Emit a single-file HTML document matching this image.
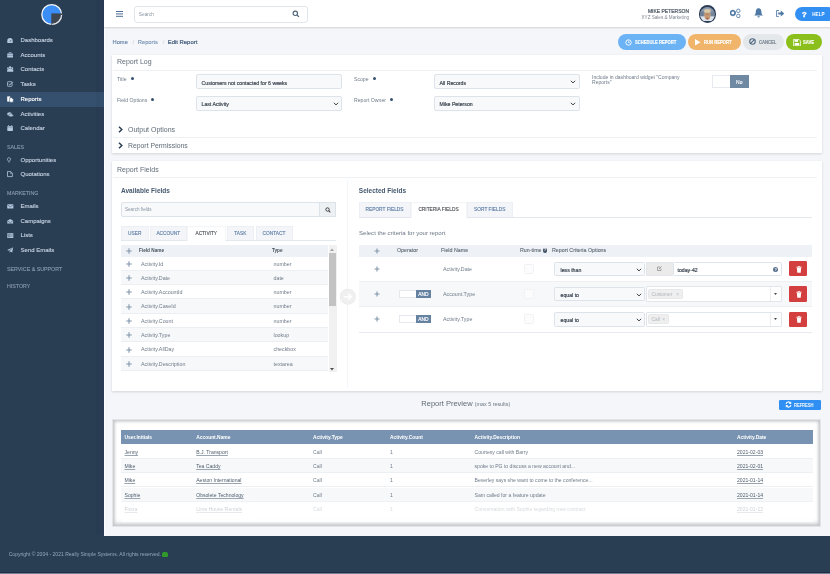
<!DOCTYPE html>
<html><head><meta charset="utf-8">
<style>
*{box-sizing:border-box;margin:0;padding:0}
html,body{width:830px;height:574px;overflow:hidden;background:#f5f6f9;font-family:"Liberation Sans",sans-serif;color:#555}
.a{position:absolute}
#side{left:0;top:0;width:104px;height:536px;background:#293d53}
#footer{left:0;top:535.8px;width:830px;height:38.2px;background:#293d53}
#top{left:104px;top:0;width:726px;height:27px;background:#fff;box-shadow:0 1px 1.5px rgba(0,0,0,.15)}
.nav{left:0;width:104px;height:15px;color:#c8d5e4;font-size:6px;line-height:15px;-webkit-text-stroke:0.12px currentColor}
.nav .t{position:absolute;left:20.5px;top:0}
.nav .i{position:absolute;left:7px;top:4.5px;width:7px;height:6px}
.sec{left:7px;color:#8b9db2;font-size:5.3px;line-height:8px;-webkit-text-stroke:0.1px currentColor}
.panel{background:#fff;box-shadow:0 1px 2.5px rgba(0,0,0,.14)}
.lbl{font-size:5.15px;color:#6f7b88}
.dot{display:inline-block;width:3px;height:3px;border-radius:50%;background:#34506e;margin-left:4px;vertical-align:1px}
.inp{background:#f7f9fb;border:1px solid #dde3ea;border-radius:2px;font-size:5.2px;color:#3d4650;font-weight:normal;-webkit-text-stroke:0.18px #3d4650;padding-top:1.7px}
.btn{border-radius:8px;color:#fff;font-size:4.6px;font-weight:bold;text-align:center;line-height:16px}

.tab{top:225.5px;height:14.5px;background:#f3f5f8;border:1px solid #eceff3;border-bottom:none;font-size:4.8px;color:#5b7ca6;-webkit-text-stroke:0.12px currentColor;text-align:center;line-height:13.6px}
.tab.act{background:#fff;color:#4a4f55;height:15px;border-color:#f3f5f7}
.th{font-size:4.7px;color:#46535f;font-weight:bold}
.td{font-size:5.3px;color:#6f7b88;line-height:6px;margin-top:-0.5px}

.tab2{top:202.3px;height:14.7px;background:#f3f5f8;border:1px solid #eceff3;border-bottom:none;font-size:4.8px;color:#5b7ca6;-webkit-text-stroke:0.12px currentColor;text-align:center;line-height:13.6px}
.tab2.act{background:#fff;color:#4a4f55;height:15.7px;border-color:#f3f5f7}
.th2{font-size:5.3px;color:#5d6874;line-height:6px;margin-top:-0.6px;-webkit-text-stroke:0.1px #5d6874}
.td2{font-size:5.3px;color:#6f7b88;line-height:6px;margin-top:-0.4px}
.td3{font-size:5.1px;color:#6f7b88;line-height:6px;margin-top:-0.6px}
.inp2{background:#f7f9fb;border:1px solid #dde3ea;border-radius:1.5px;font-size:5.2px;color:#3a4450;font-weight:normal;-webkit-text-stroke:0.18px #3a4450;padding-top:1.2px}

.bc{top:38.3px;font-size:5.75px;line-height:8px;-webkit-text-stroke:0.1px currentColor}
.bt{position:absolute;top:0.3px;font-size:5.2px;line-height:16px;white-space:nowrap;transform:scaleX(0.8);transform-origin:0 0;-webkit-text-stroke:0.15px currentColor}
</style></head><body style="filter:blur(0.3px)">
<!-- sidebar -->
<div id="side" class="a">
  <svg class="a" style="left:40px;top:2.5px" width="23" height="23" viewBox="0 0 23 23">
    <defs><clipPath id="cc"><circle cx="11.7" cy="11.5" r="10.6"/></clipPath></defs>
    <circle cx="11.7" cy="11.5" r="9.9" fill="#3a8ef5" stroke="#f4f6f9" stroke-width="1.3"/>
    <rect x="11.3" y="10.4" width="12" height="12" fill="#3d4651" clip-path="url(#cc)"/>
    <path d="M21.6 11.9 A9.9 9.9 0 0 1 12.2 21.4" fill="none" stroke="#e8ecf0" stroke-width="1.2"/>
  </svg>
  <div class="a nav" style="top:33px;"><span class="t">Dashboards</span></div>
  <svg class="a" style="left:6.8px;top:38.2px" width="7" height="7" viewBox="0 0 7 7"><path d="M0.3 5 V2.8 A2.7 2.7 0 0 1 5.7 2.8 V5 Z" fill="#b2c6de"/><path d="M3 3.8 L4 2" stroke="#293d53" stroke-width="0.6"/></svg>
  <div class="a nav" style="top:47.5px;"><span class="t">Accounts</span></div>
  <svg class="a" style="left:6.8px;top:51.5px" width="7" height="7" viewBox="0 0 7 7"><rect x="0.2" y="1.4" width="5.8" height="4.2" rx="0.5" fill="#b2c6de"/><path d="M2 1.4 V0.5 H4.2 V1.4" fill="none" stroke="#b2c6de" stroke-width="0.6"/><path d="M0.2 3.3 H6" stroke="#293d53" stroke-width="0.35"/></svg>
  <div class="a nav" style="top:62px;"><span class="t">Contacts</span></div>
  <svg class="a" style="left:6.8px;top:65.8px" width="7" height="7" viewBox="0 0 7 7"><circle cx="3.2" cy="1.6" r="1.3" fill="#b2c6de"/><circle cx="1" cy="2.2" r="0.9" fill="#b2c6de"/><circle cx="5.4" cy="2.2" r="0.9" fill="#b2c6de"/><path d="M0.1 5.8 V4 Q0.6 3 1.8 3 H4.6 Q5.9 3 6.3 4 V5.8 Z" fill="#b2c6de"/></svg>
  <div class="a nav" style="top:77px;"><span class="t">Tasks</span></div>
  <svg class="a" style="left:6.8px;top:81px" width="7" height="7" viewBox="0 0 7 7"><rect x="0.5" y="0.7" width="4.6" height="4.6" rx="0.6" fill="none" stroke="#b2c6de" stroke-width="0.8"/><path d="M1.6 2.9 L2.8 4 L5.6 0.9" fill="none" stroke="#b2c6de" stroke-width="0.9"/></svg>
  <div class="a nav" style="top:91.5px;background:#34506e;color:#fff;"><span class="t">Reports</span></div>
  <svg class="a" style="left:6.8px;top:95.8px" width="7" height="7" viewBox="0 0 7 7"><path d="M0.2 0.4 H3.2 V5.6 H0.2 Z" fill="#fff"/><path d="M2.6 1.8 H4.8 L6.2 3.2 V6.2 H2.6 Z" fill="#fff" stroke="#34506e" stroke-width="0.5"/></svg>
  <div class="a nav" style="top:106.5px;"><span class="t">Activities</span></div>
  <svg class="a" style="left:6.8px;top:111.5px" width="7" height="7" viewBox="0 0 7 7"><ellipse cx="2.5" cy="2" rx="2.4" ry="1.7" fill="#b2c6de"/><ellipse cx="4" cy="3.3" rx="2.2" ry="1.5" fill="#b2c6de" stroke="#293d53" stroke-width="0.4"/></svg>
  <div class="a nav" style="top:120.5px;"><span class="t">Calendar</span></div>
  <svg class="a" style="left:6.8px;top:125.2px" width="7" height="7" viewBox="0 0 7 7"><rect x="0.3" y="0.9" width="5.6" height="5" rx="0.4" fill="#b2c6de"/><path d="M1.5 0 V1.5 M4.7 0 V1.5" stroke="#b2c6de" stroke-width="0.7"/><path d="M0.3 2 H5.9" stroke="#293d53" stroke-width="0.35"/></svg>
  <div class="a nav" style="top:152.5px;"><span class="t">Opportunities</span></div>
  <svg class="a" style="left:6.8px;top:157.0px" width="7" height="7" viewBox="0 0 7 7"><path d="M1.6 4.2 Q0.2 3 0.4 1.8 A1.7 1.7 0 0 1 3.6 1.8 Q3.8 3 2.4 4.2 Z" fill="none" stroke="#b2c6de" stroke-width="0.7"/><path d="M1.3 5 H2.7" stroke="#b2c6de" stroke-width="0.7"/></svg>
  <div class="a nav" style="top:167px;"><span class="t">Quotations</span></div>
  <svg class="a" style="left:6.8px;top:171.3px" width="7" height="7" viewBox="0 0 7 7"><path d="M0.5 0.4 H3.5 L5.4 2.3 V5.6 H0.5 Z" fill="none" stroke="#b2c6de" stroke-width="0.8"/><path d="M3.4 0.4 V2.4 H5.4" fill="none" stroke="#b2c6de" stroke-width="0.6"/></svg>
  <div class="a nav" style="top:199px;"><span class="t">Emails</span></div>
  <svg class="a" style="left:6.8px;top:204.2px" width="7" height="7" viewBox="0 0 7 7"><rect x="0.2" y="0.3" width="6.2" height="4.3" rx="0.4" fill="#b2c6de"/><path d="M0.4 0.8 L3.3 2.9 L6.2 0.8" fill="none" stroke="#293d53" stroke-width="0.5"/></svg>
  <div class="a nav" style="top:214px;"><span class="t">Campaigns</span></div>
  <svg class="a" style="left:6.8px;top:218.6px" width="7" height="7" viewBox="0 0 7 7"><path d="M0.3 1.8 L3.2 0 L6.1 1.8 V4.6 H0.3 Z" fill="#b2c6de"/><path d="M0.8 2.2 L3.2 3.6 L5.6 2.2" fill="none" stroke="#293d53" stroke-width="0.5"/></svg>
  <div class="a nav" style="top:228px;"><span class="t">Lists</span></div>
  <svg class="a" style="left:6.8px;top:233.0px" width="7" height="7" viewBox="0 0 7 7"><rect x="0.3" y="0.2" width="6" height="4.8" fill="#b2c6de"/><path d="M0.8 1.8 H5.8 M0.8 3.3 H5.8 M2 0.7 V4.6" stroke="#293d53" stroke-width="0.4"/></svg>
  <div class="a nav" style="top:243px;"><span class="t">Send Emails</span></div>
  <svg class="a" style="left:6.8px;top:247.3px" width="7" height="7" viewBox="0 0 7 7"><path d="M6.2 0.2 L0.2 3 L2.2 3.8 Z" fill="#b2c6de"/><path d="M6.2 0.2 L2.6 4.2 L2.6 5.8 L3.6 4.6 L5.2 5.4 Z" fill="#b2c6de"/></svg>
  <div class="a sec" style="top:143px">SALES</div>
  <div class="a sec" style="top:189px">MARKETING</div>
  <div class="a sec" style="top:265px">SERVICE &amp; SUPPORT</div>
  <div class="a sec" style="top:281.5px">HISTORY</div>
  <div class="a" style="left:96.2px;top:0;width:3.5px;height:535px;background:rgba(20,30,50,.06)"></div>
  <div class="a" style="left:99.7px;top:0;width:4.3px;height:535px;background:rgba(60,50,110,.07)"></div>
</div>
<div class="a" style="left:104px;top:27px;width:1px;height:508px;background:#fdfdfe"></div>

<!-- topbar -->
<div id="top" class="a">
  <div class="a" style="left:12px;top:10.6px;width:7px;height:1.4px;background:#4d6f96;box-shadow:0 2.4px 0 #4d6f96,0 4.8px 0 #4d6f96"></div>
  <div class="a" style="left:29.5px;top:5.5px;width:174px;height:17px;border:1px solid #e1e6ec;border-radius:3px;background:#fff"></div>
  <div class="a" style="left:34.8px;top:11.6px;font-size:4.8px;color:#8a96a3">Search</div>
  <svg class="a" style="left:188.3px;top:10.2px" width="8" height="8" viewBox="0 0 8 8"><circle cx="3.3" cy="3.3" r="2.2" fill="none" stroke="#4f6479" stroke-width="1.1"/><path d="M4.9 4.9 L6.9 6.9" stroke="#4f6479" stroke-width="1.3"/></svg>
  <div class="a" style="right:141px;top:8.3px;font-size:5px;color:#4a5562;font-weight:normal;-webkit-text-stroke:0.2px #4a5562;text-align:right;white-space:nowrap">MIKE PETERSON</div>
  <div class="a" style="right:141px;top:14.6px;font-size:4.6px;color:#7d8793;text-align:right;white-space:nowrap">XYZ Sales &amp; Marketing</div>
  <div class="a" style="left:594.6px;top:5.1px;width:17.6px;height:17.6px;border-radius:50%;background:#2a3b55"></div>
  <svg class="a" style="left:596px;top:6.6px" width="14.8" height="14.8" viewBox="0 0 16 16"><defs><clipPath id="av"><circle cx="8" cy="8" r="8"/></clipPath></defs><g clip-path="url(#av)"><rect width="16" height="16" fill="#8d9aab"/><rect x="0" y="10" width="16" height="6" fill="#dfe5ec"/><rect x="0" y="5" width="4" height="5" fill="#6e7f94"/><rect x="12" y="5" width="4" height="5" fill="#75869a"/><ellipse cx="8" cy="9" rx="3.3" ry="5" fill="#c59872"/><ellipse cx="8" cy="4.2" rx="3.6" ry="2" fill="#d9c8a8"/><path d="M6 7.8 H10" stroke="#8a6a52" stroke-width="0.5"/><ellipse cx="8" cy="12.5" rx="1.5" ry="0.8" fill="#a46c55"/></g></svg>
  <svg class="a" style="left:626px;top:8px" width="11" height="11" viewBox="0 0 11 11"><circle cx="2.8" cy="5" r="2.2" fill="none" stroke="#4e79a5" stroke-width="1.5"/><circle cx="2.8" cy="5" r="2.75" fill="none" stroke="#4e79a5" stroke-width="0.9" stroke-dasharray="0.9 0.55"/><rect x="6.7" y="1.2" width="3.2" height="3.2" rx="1.1" fill="none" stroke="#4e79a5" stroke-width="0.9"/><rect x="6.7" y="6.3" width="3.2" height="3.2" rx="1.1" fill="none" stroke="#4e79a5" stroke-width="0.9"/></svg>
  <svg class="a" style="left:649.6px;top:8.3px" width="9.2" height="9.6" viewBox="0 0 9.2 9.6"><path d="M4.6 0.3 C2.4 0.3 1.8 2.2 1.8 4 C1.8 5.6 1.2 6.6 0.3 7.6 H8.9 C8 6.6 7.4 5.6 7.4 4 C7.4 2.2 6.8 0.3 4.6 0.3 Z" fill="#4e79a5"/><path d="M3.4 8.2 A1.2 1.2 0 0 0 5.8 8.2 Z" fill="#4e79a5"/></svg>
  <svg class="a" style="left:671.8px;top:9.6px" width="8.6" height="7.2" viewBox="0 0 8.6 7.2"><path d="M3 0.5 H0.6 V6.7 H3" fill="none" stroke="#4e79a5" stroke-width="0.9"/><path d="M2.2 2.6 H4.8 V0.6 L8.3 3.6 L4.8 6.6 V4.6 H2.2 Z" fill="#4e79a5"/></svg>
  <div class="a" style="left:691.4px;top:6.8px;width:40px;height:14.4px;border-radius:7.2px;background:#3390f3"></div>
  <div class="a" style="left:697.9px;top:10.8px;font-size:7.6px;line-height:8px;color:#fff;font-weight:bold;-webkit-text-stroke:0.35px #fff">?</div>
  <div class="a" style="left:708.3px;top:12.3px;font-size:4.6px;line-height:5px;color:#fff;font-weight:bold">HELP</div>
</div>

<!-- breadcrumb -->
<div class="a bc" style="left:112.5px;color:#5b7aa2">Home</div>
<div class="a bc" style="left:132.5px;color:#cdd4dc">/</div>
<div class="a bc" style="left:137.8px;color:#7390b3">Reports</div>
<div class="a bc" style="left:162.8px;color:#cdd4dc">/</div>
<div class="a bc" style="left:167.8px;color:#46607f;font-size:5.9px;-webkit-text-stroke:0.22px #46607f">Edit Report</div>
<div class="a btn" style="left:618px;top:34px;width:67.5px;height:16px;background:#6cb3f5"><span class="bt" style="left:17px">SCHEDULE REPORT</span></div>
<svg class="a" style="left:625.3px;top:38.5px" width="7" height="7" viewBox="0 0 7 7"><circle cx="3.5" cy="3.5" r="2.7" fill="none" stroke="#fff" stroke-width="0.9"/><path d="M3.5 1.8 V3.6 H4.8" fill="none" stroke="#fff" stroke-width="0.7"/></svg>
<div class="a btn" style="left:688px;top:34px;width:52.5px;height:16px;background:#f1b46b"><span class="bt" style="left:15.5px">RUN REPORT</span></div>
<svg class="a" style="left:695px;top:39.3px" width="6" height="7" viewBox="0 0 6 7"><path d="M0 0 L5.5 3.2 L0 6.4 Z" fill="#fff"/></svg>
<div class="a btn" style="left:742.8px;top:34px;width:41px;height:15.6px;background:#e5e8eb"><span class="bt" style="left:16px;color:#7b8694">CANCEL</span></div>
<svg class="a" style="left:748.8px;top:38.4px" width="7" height="7" viewBox="0 0 7 7"><circle cx="3.5" cy="3.5" r="2.75" fill="none" stroke="#4d6580" stroke-width="1.1"/><path d="M1.6 5.4 L5.4 1.6" stroke="#4d6580" stroke-width="1.1"/></svg>
<div class="a btn" style="left:785.8px;top:34px;width:35.8px;height:16px;background:#8bc01c"><span class="bt" style="left:17.3px">SAVE</span></div>
<svg class="a" style="left:793px;top:38.6px" width="8" height="7.5" viewBox="0 0 8 7.5"><path d="M0.4 0.4 H6 L7.4 1.8 V7.1 H0.4 Z" fill="none" stroke="#fff" stroke-width="0.8"/><rect x="1.5" y="0.8" width="3.6" height="2" fill="#fff"/><rect x="1.6" y="4" width="4.6" height="2.6" fill="#fff"/></svg>

<!-- report log panel -->
<div class="a panel" style="left:111.5px;top:55px;width:710px;height:97.8px"></div>
<div class="a" style="left:117px;top:58px;font-size:7px;color:#5f6b78">Report Log</div>
<div class="a" style="left:113px;top:69.5px;width:704px;height:1px;background:#eef1f4"></div>


<div class="a lbl" style="left:117px;top:76.1px">Title<span class="dot"></span></div>
<div class="a inp" style="left:195.5px;top:74.3px;width:146px;height:14.3px;padding-left:5px;line-height:12.3px">Customers not contacted for 6 weeks</div>
<div class="a lbl" style="left:117px;top:97.1px">Field Options<span class="dot"></span></div>
<div class="a inp" style="left:195.5px;top:95.6px;width:146px;height:15px;padding-left:5px;line-height:12.5px">Last Activity</div>
<svg class="a chev" style="left:333px;top:101.5px" width="6" height="4" viewBox="0 0 6 4"><path d="M0.8 0.8 L3 2.9 L5.2 0.8" fill="none" stroke="#444" stroke-width="1"/></svg>
<div class="a lbl" style="left:354px;top:76.1px">Scope<span class="dot"></span></div>
<div class="a inp" style="left:433.5px;top:74.3px;width:146px;height:14.3px;padding-left:5px;line-height:12.3px">All Records</div>
<svg class="a chev" style="left:570px;top:80px" width="6" height="4" viewBox="0 0 6 4"><path d="M0.8 0.8 L3 2.9 L5.2 0.8" fill="none" stroke="#444" stroke-width="1"/></svg>
<div class="a lbl" style="left:354px;top:97.1px">Report Owner<span class="dot"></span></div>
<div class="a inp" style="left:433.5px;top:95.6px;width:146px;height:15px;padding-left:5px;line-height:12.5px">Mike Peterson</div>
<svg class="a chev" style="left:570px;top:101.5px" width="6" height="4" viewBox="0 0 6 4"><path d="M0.8 0.8 L3 2.9 L5.2 0.8" fill="none" stroke="#444" stroke-width="1"/></svg>
<div class="a lbl" style="left:592px;top:74.5px;width:93px;line-height:5.1px;font-size:5.05px">Include in dashboard widget "Company Reports"</div>
<div class="a" style="left:711.5px;top:74.5px;width:37px;height:13.6px;border:1px solid #e6eaee;background:#fff"></div>
<div class="a" style="left:730px;top:74.5px;width:18.5px;height:13.6px;background:#7089a3;color:#fff;font-size:5px;text-align:center;line-height:15.2px;-webkit-text-stroke:0.1px #fff">No</div>
<svg class="a" style="left:118px;top:126px" width="5" height="7" viewBox="0 0 5 7"><path d="M1 0.8 L3.8 3.5 L1 6.2" fill="none" stroke="#2c3e55" stroke-width="1.5"/></svg>
<div class="a" style="left:128px;top:125.5px;font-size:7px;color:#5f6b78">Output Options</div>
<div class="a" style="left:113px;top:136.5px;width:704px;height:1px;background:#eef1f4"></div>
<svg class="a" style="left:118px;top:142px" width="5" height="7" viewBox="0 0 5 7"><path d="M1 0.8 L3.8 3.5 L1 6.2" fill="none" stroke="#2c3e55" stroke-width="1.5"/></svg>
<div class="a" style="left:128px;top:141.6px;font-size:6.85px;color:#5f6b78">Report Permissions</div>

<!-- report fields panel -->
<div class="a panel" style="left:111.5px;top:160.8px;width:710px;height:230.2px"></div>
<div class="a" style="left:117px;top:165.5px;font-size:7px;color:#5f6b78">Report Fields</div>
<div class="a" style="left:113px;top:177px;width:704px;height:1px;background:#eef1f4"></div>
<div class="a" style="left:346.8px;top:180px;width:1px;height:208px;background:#f4f5f7"></div>
<div class="a" style="left:121px;top:187px;font-size:6.5px;color:#45586e;font-weight:bold">Available Fields</div>
<div class="a" style="left:358.8px;top:187px;font-size:6.5px;color:#45586e;font-weight:bold">Selected Fields</div>

<div class="a" style="left:121px;top:202px;width:215px;height:14.5px;border:1px solid #dde3ea;border-radius:2px;background:#f7f9fb"></div>
<div class="a" style="left:319px;top:202px;width:17px;height:14.5px;border:1px solid #dde3ea;background:#eef1f4"></div>
<svg class="a" style="left:324.8px;top:206.6px" width="6" height="6" viewBox="0 0 6 6"><circle cx="2.5" cy="2.5" r="1.7" fill="none" stroke="#444" stroke-width="1"/><path d="M3.7 3.7 L5.3 5.3" stroke="#444" stroke-width="1.1"/></svg>
<div class="a" style="left:125px;top:207px;font-size:4.6px;color:#8a96a3">Search fields</div>
<!-- tabs left -->
<div class="a" style="left:121px;top:239.5px;width:215px;height:1px;background:#e3e8ee"></div>
<div class="a tab" style="left:121px;width:27.5px">USER</div>
<div class="a tab" style="left:149.5px;width:37.5px">ACCOUNT</div>
<div class="a tab act" style="left:187px;width:38.5px">ACTIVITY</div>
<div class="a tab" style="left:226.5px;width:27.5px">TASK</div>
<div class="a tab" style="left:255.5px;width:37px">CONTACT</div>
<!-- left table -->
<div class="a" style="left:121px;top:244.5px;width:207px;height:12px;background:#eef2f6"></div>
<svg class="a" style="left:126px;top:247.5px" width="6" height="6" viewBox="0 0 6 6"><path d="M3 0.3 V5.7 M0.3 3 H5.7" stroke="#7f93a8" stroke-width="1.05"/></svg>
<div class="a th" style="left:139px;top:248px">Field Name</div>
<div class="a th" style="left:272px;top:248px">Type</div>
<div class="a" style="left:121px;top:256.5px;width:207px;height:14.3px;background:#ffffff;border-bottom:1px solid #edf0f3"></div><svg class="a" style="left:126px;top:260.8px" width="6" height="6" viewBox="0 0 6 6"><path d="M3 0.3 V5.7 M0.3 3 H5.7" stroke="#7f93a8" stroke-width="1.05"/></svg><div class="a td" style="left:141px;top:261.0px">Activity.Id</div><div class="a td" style="left:273.5px;top:261.0px">number</div><div class="a" style="left:121px;top:270.8px;width:207px;height:14.3px;background:#f6f8fa;border-bottom:1px solid #edf0f3"></div><svg class="a" style="left:126px;top:275.1px" width="6" height="6" viewBox="0 0 6 6"><path d="M3 0.3 V5.7 M0.3 3 H5.7" stroke="#7f93a8" stroke-width="1.05"/></svg><div class="a td" style="left:141px;top:275.3px">Activity.Date</div><div class="a td" style="left:273.5px;top:275.3px">date</div><div class="a" style="left:121px;top:285.1px;width:207px;height:14.3px;background:#ffffff;border-bottom:1px solid #edf0f3"></div><svg class="a" style="left:126px;top:289.40000000000003px" width="6" height="6" viewBox="0 0 6 6"><path d="M3 0.3 V5.7 M0.3 3 H5.7" stroke="#7f93a8" stroke-width="1.05"/></svg><div class="a td" style="left:141px;top:289.6px">Activity.AccountId</div><div class="a td" style="left:273.5px;top:289.6px">number</div><div class="a" style="left:121px;top:299.40000000000003px;width:207px;height:14.3px;background:#f6f8fa;border-bottom:1px solid #edf0f3"></div><svg class="a" style="left:126px;top:303.70000000000005px" width="6" height="6" viewBox="0 0 6 6"><path d="M3 0.3 V5.7 M0.3 3 H5.7" stroke="#7f93a8" stroke-width="1.05"/></svg><div class="a td" style="left:141px;top:303.90000000000003px">Activity.CaseId</div><div class="a td" style="left:273.5px;top:303.90000000000003px">number</div><div class="a" style="left:121px;top:313.70000000000005px;width:207px;height:14.3px;background:#ffffff;border-bottom:1px solid #edf0f3"></div><svg class="a" style="left:126px;top:318.00000000000006px" width="6" height="6" viewBox="0 0 6 6"><path d="M3 0.3 V5.7 M0.3 3 H5.7" stroke="#7f93a8" stroke-width="1.05"/></svg><div class="a td" style="left:141px;top:318.20000000000005px">Activity.Count</div><div class="a td" style="left:273.5px;top:318.20000000000005px">number</div><div class="a" style="left:121px;top:328.00000000000006px;width:207px;height:14.3px;background:#f6f8fa;border-bottom:1px solid #edf0f3"></div><svg class="a" style="left:126px;top:332.30000000000007px" width="6" height="6" viewBox="0 0 6 6"><path d="M3 0.3 V5.7 M0.3 3 H5.7" stroke="#7f93a8" stroke-width="1.05"/></svg><div class="a td" style="left:141px;top:332.50000000000006px">Activity.Type</div><div class="a td" style="left:273.5px;top:332.50000000000006px">lookup</div><div class="a" style="left:121px;top:342.30000000000007px;width:207px;height:14.3px;background:#ffffff;border-bottom:1px solid #edf0f3"></div><svg class="a" style="left:126px;top:346.6000000000001px" width="6" height="6" viewBox="0 0 6 6"><path d="M3 0.3 V5.7 M0.3 3 H5.7" stroke="#7f93a8" stroke-width="1.05"/></svg><div class="a td" style="left:141px;top:346.80000000000007px">Activity.AllDay</div><div class="a td" style="left:273.5px;top:346.80000000000007px">checkbox</div><div class="a" style="left:121px;top:356.6000000000001px;width:207px;height:14.3px;background:#f6f8fa;border-bottom:1px solid #edf0f3"></div><svg class="a" style="left:126px;top:360.9000000000001px" width="6" height="6" viewBox="0 0 6 6"><path d="M3 0.3 V5.7 M0.3 3 H5.7" stroke="#7f93a8" stroke-width="1.05"/></svg><div class="a td" style="left:141px;top:361.1000000000001px">Activity.Description</div><div class="a td" style="left:273.5px;top:361.1000000000001px">textarea</div>
<div class="a" style="left:328.5px;top:244.5px;width:8px;height:127.5px;background:#f1f1f1"></div>
<div class="a" style="left:329px;top:253.4px;width:6.8px;height:52.5px;background:#c3c3c3"></div>
<svg class="a" style="left:330px;top:247.5px" width="4" height="3" viewBox="0 0 4 3"><path d="M0 3 L2 0.5 L4 3Z" fill="#a3a3a3"/></svg>
<svg class="a" style="left:330px;top:367.5px" width="4" height="3" viewBox="0 0 4 3"><path d="M0 0 L2 2.5 L4 0Z" fill="#505050"/></svg>
<svg class="a" style="left:339px;top:287.5px" width="18" height="18" viewBox="0 0 18 18"><circle cx="8.8" cy="8.7" r="8" fill="#ebebeb"/><circle cx="8.8" cy="8.7" r="7.2" fill="#f0f0f0"/><path d="M4.8 8.7 H12.2 M9.2 5.6 L12.4 8.7 L9.2 11.8" fill="none" stroke="#fff" stroke-width="1.5"/></svg>

<div class="a" style="left:358.5px;top:217px;width:453px;height:1px;background:#e3e8ee"></div>
<div class="a tab2" style="left:358.5px;width:52px">REPORT FIELDS</div>
<div class="a tab2 act" style="left:410.5px;width:56px">CRITERIA FIELDS</div>
<div class="a tab2" style="left:467px;width:45.5px">SORT FIELDS</div>
<div class="a" style="left:359px;top:229.6px;font-size:6.05px;color:#6b7785">Select the criteria for your report</div>
<div class="a" style="left:359px;top:244.5px;width:453px;height:12.3px;background:#eef2f6"></div>
<svg class="a" style="left:373.5px;top:247.5px" width="6" height="6" viewBox="0 0 6 6"><path d="M3 0.5 V5.5 M0.5 3 H5.5" stroke="#8296ab" stroke-width="1.1"/></svg>
<div class="a th2" style="left:397px;top:248px">Operator</div>
<div class="a th2" style="left:441px;top:248px">Field Name</div>
<div class="a th2" style="left:520px;top:248px">Run-time</div><div class="a" style="left:542.7px;top:248.4px;width:4.8px;height:4.8px;border-radius:50%;background:#3f5166;color:#fff;font-size:4px;line-height:4.8px;text-align:center;font-weight:bold">?</div>
<div class="a th2" style="left:552px;top:248px">Report Criteria Options</div>
<div class="a" style="left:359px;top:281px;width:453px;height:25.5px;background:#f6f8fa;border-top:1px solid #edf0f3;border-bottom:1px solid #edf0f3"></div>
<div class="a" style="left:359px;top:332px;width:453px;height:1px;background:#e6eaef"></div>
<svg class="a" style="left:373.5px;top:266px" width="6" height="6" viewBox="0 0 6 6"><path d="M3 0.5 V5.5 M0.5 3 H5.5" stroke="#8296ab" stroke-width="1.1"/></svg><div class="a td2" style="left:443px;top:266.2px">Activity.Date</div><div class="a" style="left:524px;top:264px;width:10px;height:10px;border:1px solid #f0f2f5;border-radius:1.5px;background:#fcfcfd"></div><div class="a inp2" style="left:554px;top:261.7px;width:90.5px;height:14.6px;padding-left:5.5px;line-height:12.6px">less than</div><svg class="a" style="left:635.5px;top:267.5px" width="6" height="4" viewBox="0 0 6 4"><path d="M0.8 0.8 L3 2.9 L5.2 0.8" fill="none" stroke="#444" stroke-width="1"/></svg><div class="a" style="left:789.3px;top:261.2px;width:18.2px;height:15.3px;background:#d33f3f;border-radius:1.2px"></div><svg class="a" style="left:795.5px;top:265.5px" width="6" height="7" viewBox="0 0 6 7"><path d="M0.3 1.3 H5.7 M2 1.3 V0.4 H4 V1.3" stroke="#fff" stroke-width="0.8" fill="none"/><path d="M0.9 2 H5.1 L4.7 6.8 H1.3 Z" fill="#fff"/></svg><svg class="a" style="left:373.5px;top:291.2px" width="6" height="6" viewBox="0 0 6 6"><path d="M3 0.5 V5.5 M0.5 3 H5.5" stroke="#8296ab" stroke-width="1.1"/></svg><div class="a" style="left:399px;top:289.7px;width:31.5px;height:8.6px;border:1px solid #e5e9ed;background:#fff"></div><div class="a" style="left:415.5px;top:289.6px;width:15.7px;height:8.6px;background:#6582a1;color:#fff;font-size:4.9px;text-align:center;line-height:9.4px;-webkit-text-stroke:0.15px #fff">AND</div><div class="a td2" style="left:443px;top:291.4px">Account.Type</div><div class="a" style="left:524px;top:289.2px;width:10px;height:10px;border:1px solid #f0f2f5;border-radius:1.5px;background:#fcfcfd"></div><div class="a inp2" style="left:554px;top:286.9px;width:90.5px;height:14.6px;padding-left:5.5px;line-height:12.6px">equal to</div><svg class="a" style="left:635.5px;top:292.7px" width="6" height="4" viewBox="0 0 6 4"><path d="M0.8 0.8 L3 2.9 L5.2 0.8" fill="none" stroke="#444" stroke-width="1"/></svg><div class="a" style="left:789.3px;top:286.4px;width:18.2px;height:15.3px;background:#d33f3f;border-radius:1.2px"></div><svg class="a" style="left:795.5px;top:290.7px" width="6" height="7" viewBox="0 0 6 7"><path d="M0.3 1.3 H5.7 M2 1.3 V0.4 H4 V1.3" stroke="#fff" stroke-width="0.8" fill="none"/><path d="M0.9 2 H5.1 L4.7 6.8 H1.3 Z" fill="#fff"/></svg><svg class="a" style="left:373.5px;top:316.4px" width="6" height="6" viewBox="0 0 6 6"><path d="M3 0.5 V5.5 M0.5 3 H5.5" stroke="#8296ab" stroke-width="1.1"/></svg><div class="a" style="left:399px;top:314.9px;width:31.5px;height:8.6px;border:1px solid #e5e9ed;background:#fff"></div><div class="a" style="left:415.5px;top:314.8px;width:15.7px;height:8.6px;background:#6582a1;color:#fff;font-size:4.9px;text-align:center;line-height:9.4px;-webkit-text-stroke:0.15px #fff">AND</div><div class="a td2" style="left:443px;top:316.59999999999997px">Activity.Type</div><div class="a" style="left:524px;top:314.4px;width:10px;height:10px;border:1px solid #f0f2f5;border-radius:1.5px;background:#fcfcfd"></div><div class="a inp2" style="left:554px;top:312.09999999999997px;width:90.5px;height:14.6px;padding-left:5.5px;line-height:12.6px">equal to</div><svg class="a" style="left:635.5px;top:317.9px" width="6" height="4" viewBox="0 0 6 4"><path d="M0.8 0.8 L3 2.9 L5.2 0.8" fill="none" stroke="#444" stroke-width="1"/></svg><div class="a" style="left:789.3px;top:311.6px;width:18.2px;height:15.3px;background:#d33f3f;border-radius:1.2px"></div><svg class="a" style="left:795.5px;top:315.9px" width="6" height="7" viewBox="0 0 6 7"><path d="M0.3 1.3 H5.7 M2 1.3 V0.4 H4 V1.3" stroke="#fff" stroke-width="0.8" fill="none"/><path d="M0.9 2 H5.1 L4.7 6.8 H1.3 Z" fill="#fff"/></svg>
<div class="a" style="left:646px;top:261.7px;width:27px;height:14.6px;background:#ebebeb;border:1px solid #e2e6eb;border-right:none"></div>
<svg class="a" style="left:657px;top:266px" width="5" height="5" viewBox="0 0 5 5"><path d="M0.5 1 H3 M0.5 1 V4.5 H4 V2.5" fill="none" stroke="#777" stroke-width="0.6"/><path d="M2 3 L4.5 0.5" stroke="#777" stroke-width="0.7"/></svg>
<div class="a inp2" style="left:673px;top:261.7px;width:108.6px;height:14.6px;background:#fff;padding-left:3.5px;line-height:12.6px">today-42</div>
<div class="a" style="left:773.2px;top:266.6px;width:5px;height:5px;border-radius:50%;background:#566f8c;color:#fff;font-size:4px;line-height:5px;text-align:center;font-weight:bold">?</div>
<div class="a" style="left:646px;top:286.3px;width:135.6px;height:15.9px;background:#fff;border:1px solid #e1e6ec;border-radius:1px"></div><div class="a" style="left:769.8px;top:287.3px;width:1px;height:13.9px;background:#eceff2"></div><svg class="a" style="left:774px;top:293.2px" width="3" height="2" viewBox="0 0 3 2"><path d="M0 0 H3 L1.5 2Z" fill="#444"/></svg><div class="a" style="left:648px;top:289.2px;width:35px;height:10px;background:#efefef;border:1px solid #e6e8ea;border-radius:1.5px;font-size:4.8px;color:#afb5bc;line-height:9.6px;padding-left:2.5px">Customer<span style="position:absolute;right:3px;color:#b7bec6">&times;</span></div><div class="a" style="left:646px;top:311.5px;width:135.6px;height:15.9px;background:#fff;border:1px solid #e1e6ec;border-radius:1px"></div><div class="a" style="left:769.8px;top:312.5px;width:1px;height:13.9px;background:#eceff2"></div><svg class="a" style="left:774px;top:318.4px" width="3" height="2" viewBox="0 0 3 2"><path d="M0 0 H3 L1.5 2Z" fill="#444"/></svg><div class="a" style="left:648px;top:314.4px;width:21px;height:10px;background:#efefef;border:1px solid #e6e8ea;border-radius:1.5px;font-size:4.8px;color:#afb5bc;line-height:9.6px;padding-left:2.5px">Call<span style="position:absolute;right:3px;color:#b7bec6">&times;</span></div>
<!-- report preview -->
<div class="a" style="left:421.3px;top:399.3px;font-size:7.5px;color:#5f6b78;white-space:nowrap">Report Preview <span style="font-size:5.4px;color:#6b7785">(max 5 results)</span></div>
<div class="a" style="left:778.6px;top:399.8px;width:42.8px;height:10.2px;background:#2f8ff2;border-radius:1.2px"></div><div class="a" style="left:793.9px;top:400.6px;font-size:4.9px;line-height:10px;color:#fff;white-space:nowrap;transform:scaleX(0.83);transform-origin:0 0;-webkit-text-stroke:0.12px #fff">REFRESH</div>
<svg class="a" style="left:785.3px;top:401.4px" width="7" height="7" viewBox="0 0 7 7"><path d="M5.6 2.2 A2.4 2.4 0 0 0 1.1 3" fill="none" stroke="#fff" stroke-width="1.1"/><path d="M1.4 4.8 A2.4 2.4 0 0 0 5.9 4" fill="none" stroke="#fff" stroke-width="1.1"/><path d="M6.2 0.6 V3 H3.8 Z" fill="#fff"/><path d="M0.8 6.4 V4 H3.2 Z" fill="#fff"/></svg>
<div class="a" style="left:112px;top:419px;width:709px;height:108px;background:#fff;box-shadow:inset 0 0 3px 1.6px #c3c5c8,inset 0 -4px 5px -1px #dcdee1;border:1px solid #e3e5e8"></div>
<div class="a" style="left:121px;top:430.3px;width:692px;height:14.1px;background:#7893b1"></div>
<div class="a" style="left:124.5px;top:435.3px;font-size:4.9px;color:#fff;font-weight:bold">User.Initials</div><div class="a" style="left:196.2px;top:435.3px;font-size:4.9px;color:#fff;font-weight:bold">Account.Name</div><div class="a" style="left:313px;top:435.3px;font-size:4.9px;color:#fff;font-weight:bold">Activity.Type</div><div class="a" style="left:390px;top:435.3px;font-size:4.9px;color:#fff;font-weight:bold">Activity.Count</div><div class="a" style="left:474.5px;top:435.3px;font-size:4.9px;color:#fff;font-weight:bold">Activity.Description</div><div class="a" style="left:737px;top:435.3px;font-size:4.9px;color:#fff;font-weight:bold">Activity.Date</div><div class="a" style="left:121px;top:444.6px;width:692px;height:14.3px;background:#ffffff;border-bottom:1px solid #edf0f3;"></div><div class="a td3" style="left:124.5px;top:449.3px;text-decoration:underline;text-decoration-color:#9aa5b1;color:#4f5d6c;">Jenny</div><div class="a td3" style="left:196.2px;top:449.3px;text-decoration:underline;text-decoration-color:#9aa5b1;color:#4f5d6c;">B.J. Transport</div><div class="a td3" style="left:313px;top:449.3px;">Call</div><div class="a td3" style="left:390px;top:449.3px;">1</div><div class="a td3" style="left:474.5px;top:449.3px;">Courtesy call with Barry</div><div class="a td3" style="left:737px;top:449.3px;text-decoration:underline;text-decoration-color:#9aa5b1;color:#4f5d6c;">2021-02-03</div><div class="a" style="left:121px;top:458.90000000000003px;width:692px;height:14.3px;background:#f6f8fa;border-bottom:1px solid #edf0f3;"></div><div class="a td3" style="left:124.5px;top:463.6px;text-decoration:underline;text-decoration-color:#9aa5b1;color:#4f5d6c;">Mike</div><div class="a td3" style="left:196.2px;top:463.6px;text-decoration:underline;text-decoration-color:#9aa5b1;color:#4f5d6c;">Tea Caddy</div><div class="a td3" style="left:313px;top:463.6px;">Call</div><div class="a td3" style="left:390px;top:463.6px;">1</div><div class="a td3" style="left:474.5px;top:463.6px;">spoke to PG to discuss a new account and...</div><div class="a td3" style="left:737px;top:463.6px;text-decoration:underline;text-decoration-color:#9aa5b1;color:#4f5d6c;">2021-02-01</div><div class="a" style="left:121px;top:473.20000000000005px;width:692px;height:14.3px;background:#ffffff;border-bottom:1px solid #edf0f3;"></div><div class="a td3" style="left:124.5px;top:477.90000000000003px;text-decoration:underline;text-decoration-color:#9aa5b1;color:#4f5d6c;">Mike</div><div class="a td3" style="left:196.2px;top:477.90000000000003px;text-decoration:underline;text-decoration-color:#9aa5b1;color:#4f5d6c;">Aeston International</div><div class="a td3" style="left:313px;top:477.90000000000003px;">Call</div><div class="a td3" style="left:390px;top:477.90000000000003px;">1</div><div class="a td3" style="left:474.5px;top:477.90000000000003px;">Beverley says she want to come to the conference...</div><div class="a td3" style="left:737px;top:477.90000000000003px;text-decoration:underline;text-decoration-color:#9aa5b1;color:#4f5d6c;">2021-01-14</div><div class="a" style="left:121px;top:487.50000000000006px;width:692px;height:14.3px;background:#f6f8fa;border-bottom:1px solid #edf0f3;"></div><div class="a td3" style="left:124.5px;top:492.20000000000005px;text-decoration:underline;text-decoration-color:#9aa5b1;color:#4f5d6c;">Sophie</div><div class="a td3" style="left:196.2px;top:492.20000000000005px;text-decoration:underline;text-decoration-color:#9aa5b1;color:#4f5d6c;">Obsolete Technology</div><div class="a td3" style="left:313px;top:492.20000000000005px;">Call</div><div class="a td3" style="left:390px;top:492.20000000000005px;">1</div><div class="a td3" style="left:474.5px;top:492.20000000000005px;">Sam called for a feature update</div><div class="a td3" style="left:737px;top:492.20000000000005px;text-decoration:underline;text-decoration-color:#9aa5b1;color:#4f5d6c;">2021-01-14</div><div class="a" style="left:121px;top:501.80000000000007px;width:692px;height:14.3px;background:#ffffff;opacity:.5;"></div><div class="a td3" style="left:124.5px;top:506.50000000000006px;text-decoration:underline;text-decoration-color:#9aa5b1;color:#4f5d6c;opacity:.5;">Fiona</div><div class="a td3" style="left:196.2px;top:506.50000000000006px;text-decoration:underline;text-decoration-color:#9aa5b1;color:#4f5d6c;opacity:.5;">Lime House Rentals</div><div class="a td3" style="left:313px;top:506.50000000000006px;opacity:.5;">Call</div><div class="a td3" style="left:390px;top:506.50000000000006px;opacity:.5;">1</div><div class="a td3" style="left:474.5px;top:506.50000000000006px;opacity:.5;">Conversation with Sophie regarding new contract</div><div class="a td3" style="left:737px;top:506.50000000000006px;text-decoration:underline;text-decoration-color:#9aa5b1;color:#4f5d6c;opacity:.5;">2021-01-12</div>
<div class="a" style="left:121px;top:498px;width:692px;height:24px;background:linear-gradient(rgba(255,255,255,0),rgba(255,255,255,.45) 50%,rgba(255,255,255,.8))"></div>
<div id="footer" class="a"><div class="a" style="left:8.7px;top:15.5px;font-size:5.05px;color:#94a8bf;white-space:nowrap">Copyright &copy; 2004 - 2021 Really Simple Systems. All rights reserved.</div><div class="a" style="left:162px;top:16.4px;width:6px;height:4.4px;background:#2f9a2a;border-radius:2px 2px 1px 1px"></div><div class="a" style="left:0;top:35.9px;width:830px;height:1px;background:#212e46"></div><div class="a" style="left:0;top:36.9px;width:830px;height:1.4px;background:#747e95"></div></div>
</body></html>
